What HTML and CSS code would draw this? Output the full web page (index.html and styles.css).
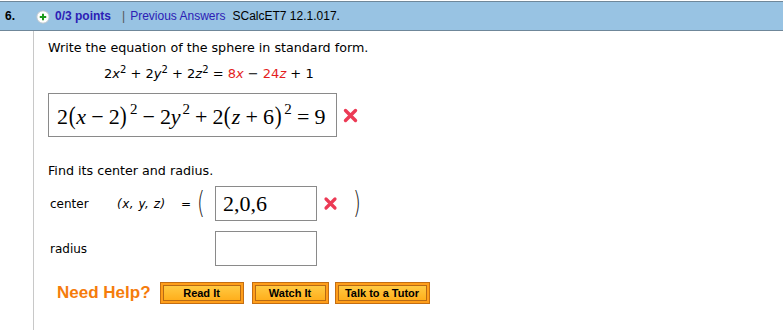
FILE: index.html
```html
<!DOCTYPE html>
<html>
<head>
<meta charset="utf-8">
<link rel="stylesheet" href="styles.css">
</head>
<body>
<div class="header">
  <span class="qnum">6.</span>
  <span class="plus"><svg width="14" height="14" viewBox="0 0 14 14"><circle cx="7" cy="7" r="6.2" fill="#fff" stroke="#b9c4cc" stroke-width="1"/><path d="M7 3.8v6.4M3.8 7h6.4" stroke="#1c9a1c" stroke-width="2"/></svg></span>
  <span class="points">0/3 points</span>
  <span class="sep">|</span>
  <span class="prev">Previous Answers</span>
  <span class="code">SCalcET7 12.1.017.</span>
</div>
<div class="body">
  <div class="content">
    <p class="prompt">Write the equation of the sphere in standard form.</p>
    <p class="given">2<i>x</i><sup>2</sup> + 2<i>y</i><sup>2</sup> + 2<i>z</i><sup>2</sup> = <span class="red">8<i>x</i></span> − <span class="red">24<i>z</i></span> + 1</p>
    <div class="answer-row">
      <div class="mathbox"><span class="math">2<span class="mp">(</span><i>x</i> − 2<span class="mp">)</span><sup>2</sup> − 2<i>y</i><sup>2</sup> + 2<span class="mp">(</span><i>z</i> + 6<span class="mp">)</span><sup>2</sup> = 9</span></div>
      <svg class="xmark" width="15" height="15" viewBox="0 0 15 15"><path d="M2.5 2.5l10 10M12.5 2.5l-10 10" stroke="#ec3a55" stroke-width="3.4" stroke-linecap="round"/></svg>
    </div>
    <p class="prompt find">Find its center and radius.</p>
    <div class="row">
      <span class="label">center</span>
      <span class="xyz">(<i>x</i>, <i>y</i>, <i>z</i>)</span>
      <span class="eq">=</span>
      <span class="paren">(</span>
      <div class="inbox serif">2,0,6</div>
      <svg class="xmark small" width="15" height="15" viewBox="0 0 15 15"><path d="M3 3l9 9M12 3l-9 9" stroke="#ec3a55" stroke-width="3.2" stroke-linecap="round"/></svg>
      <span class="paren close">)</span>
    </div>
    <div class="row radius-row">
      <span class="label">radius</span>
      <div class="inbox empty"></div>
    </div>
    <div class="help">
      <span class="need">Need Help?</span>
      <button class="btn read">Read It</button>
      <button class="btn watch">Watch It</button>
      <button class="btn tutor">Talk to a Tutor</button>
    </div>
  </div>
</div>
</body>
</html>
```
FILE: styles.css
```css
html, body {
  margin: 0;
  padding: 0;
  background: #fff;
  width: 783px;
  height: 330px;
  overflow: hidden;
}
.header {
  margin-top: 1px;
  height: 28px;
  background: #98c3e3;
  border-top: 1px solid #6f8799;
  border-bottom: 1px solid #6f8799;
  display: flex;
  align-items: center;
  font-family: "Liberation Sans", Arial, sans-serif;
  font-size: 12px;
  color: #000;
}
.qnum {
  font-weight: bold;
  margin-left: 5px;
  width: 31px;
}
.plus {
  display: flex;
  width: 14px;
  height: 14px;
  margin-right: 5px;
  margin-top: 1px;
}
.points {
  font-weight: bold;
  color: #2c20b5;
}
.sep {
  color: #555;
  margin-left: 11px;
  margin-right: 5px;
}
.prev {
  color: #2c20b5;
  margin-right: 7px;
}
.body {
  margin-left: 33px;
  border-left: 1px solid #c8c8c8;
  height: 300px;
}
.content {
  padding-left: 14px;
  font-family: "DejaVu Sans", Verdana, sans-serif;
  font-size: 12px;
  color: #000;
}
p { margin: 0; }
.prompt {
  padding-top: 9px;
  font-size: 12.7px;
}
.given {
  margin-top: 11px;
  margin-left: 56px;
  font-size: 13px;
}
.given i { font-style: italic; }
.given sup { font-size: 10px; vertical-align: 5px; line-height: 0; }
.red { color: #e41d1d; }
.answer-row {
  display: flex;
  align-items: center;
  margin-top: 12px;
}
.mathbox {
  width: 279px;
  height: 42px;
  border: 1px solid #8a8a8a;
  padding-left: 8px;
  box-sizing: content-box;
  display: flex;
  align-items: center;
  font-family: "Liberation Serif", "Times New Roman", serif;
  font-size: 22px;
}
.math { white-space: pre; padding-top: 4px; letter-spacing: -0.2px; }
.math i { font-style: italic; }
.math sup { font-size: 15px; vertical-align: 10px; line-height: 0; margin-left: 2px; }
.mp { font-size: 26px; display: inline-block; transform: scaleX(0.8); line-height: 0; }
.xmark { margin-left: 6px; }
.find { padding-top: 26px; }
.row {
  display: flex;
  align-items: center;
  margin-top: 8px;
  height: 35px;
}
.label {
  width: 67px;
  padding-left: 2px;
  font-size: 12px;
}
.xyz {
  width: 64px;
  font-size: 12px;
  font-style: italic;
  letter-spacing: 0.5px;
}
.xyz i { font-style: italic; }
.eq { width: 16px; font-size: 12px; }
.paren {
  font-family: "DejaVu Sans", sans-serif;
  font-size: 31px;
  font-weight: 200;
  color: #222;
  width: 18px;
  transform: scaleX(0.65);
  transform-origin: left center;
  margin-top: -3px;
}
.paren.close { margin-left: 15px; }
.inbox {
  width: 100px;
  height: 33px;
  border: 1px solid #8a8a8a;
  box-sizing: content-box;
}
.inbox.serif {
  font-family: "Liberation Serif", "Times New Roman", serif;
  font-size: 22px;
  display: flex;
  align-items: center;
  padding-left: 7px;
  width: 93px;
}
.xmark.small { margin-left: 6px; }
.radius-row {
  margin-top: 10px;
}
.radius-row .label { width: 165px; }
.help {
  display: flex;
  align-items: center;
  margin-top: 16px;
  font-family: "Liberation Sans", Arial, sans-serif;
}
.need {
  margin-left: 9px;
  font-size: 17px;
  font-weight: bold;
  color: #f57c0c;
  margin-right: 9px;
}
.btn {
  font-family: "Liberation Sans", Arial, sans-serif;
  font-size: 11px;
  font-weight: bold;
  color: #000;
  height: 22px;
  padding: 0;
  border: 1px solid #c46e12;
  background: linear-gradient(#ffcf4a, #ffa914);
  box-shadow: inset 0 0 0 2px #ff9e1a, inset 0 0 0 3px #b86a14;
  cursor: pointer;
}
.btn.read { width: 84px; margin-right: 8px; }
.btn.watch { width: 77px; margin-right: 6px; }
.btn.tutor { width: 95px; }
```
